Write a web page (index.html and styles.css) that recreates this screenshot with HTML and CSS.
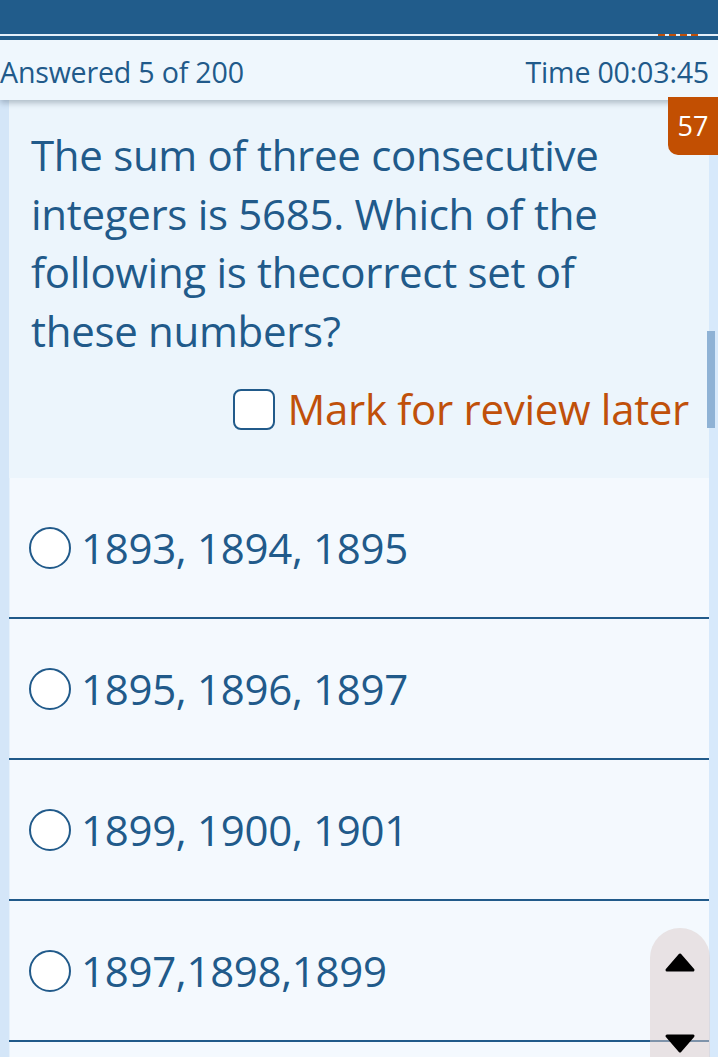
FILE: index.html
```html
<!DOCTYPE html>
<html lang="en">
<head>
<meta charset="utf-8">
<title>Quiz</title>
<link rel="stylesheet" href="styles.css">
</head>
<body>
<div class="topbar">
  <div class="topline"><span class="peek"></span></div>
</div>
<header class="status">
  <span class="answered">Answered 5 of 200</span>
  <span class="timer">Time 00:03:45</span>
</header>
<div class="badge">57</div>
<div class="page">
  <div class="rail-left"></div>
  <main class="content">
    <section class="question">
      <p class="qtext"><span class="ln">The sum of three consecutive</span><span class="ln">integers is 5685. Which of the</span><span class="ln">following is thecorrect set of</span><span class="ln">these numbers?</span></p>
      <label class="review"><span class="checkbox"></span><span class="review-text">Mark for review later</span></label>
    </section>
    <ul class="options">
      <li class="option"><span class="radio"></span><span class="opt-text">1893, 1894, 1895</span></li>
      <li class="option"><span class="radio"></span><span class="opt-text">1895, 1896, 1897</span></li>
      <li class="option"><span class="radio"></span><span class="opt-text">1899, 1900, 1901</span></li>
      <li class="option"><span class="radio"></span><span class="opt-text">1897,1898,1899</span></li>
    </ul>
  </main>
  <div class="rail-right"><div class="thumb"></div></div>
</div>
<div class="scroller">
  <svg width="60" height="129" viewBox="0 0 60 129">
    <path d="M17 42 L30 27 L43 42 Z" fill="#000" stroke="#000" stroke-width="3" stroke-linejoin="round"/>
    <path d="M17 108 L30 123 L43 108 Z" fill="#000" stroke="#000" stroke-width="3" stroke-linejoin="round"/>
  </svg>
</div>
</body>
</html>
```
FILE: styles.css
```css
* { box-sizing: border-box; }
html, body { margin: 0; padding: 0; }
body {
  width: 718px;
  height: 1057px;
  overflow: hidden;
  background: #f4f9fe;
  font-family: "Open Sans", "Noto Sans", sans-serif;
  color: #215a8a;
  position: relative;
}
.topbar {
  height: 40px;
  background: #215c8b;
  padding-top: 34px;
}
.topline {
  height: 2px;
  background: #e4eff9;
  position: relative;
}
.peek {
  position: absolute;
  left: 658px;
  top: 0;
  width: 40px;
  height: 2px;
  background: repeating-linear-gradient(90deg, #c0500a 0 7px, transparent 7px 11px);
}
.status {
  height: 60px;
  background: #eff7fd;
  display: flex;
  justify-content: space-between;
  align-items: center;
  padding: 0 9px 0 0;
  font-size: 28.6px;
  letter-spacing: -0.2px;
  position: relative;
  z-index: 2;
  box-shadow: 0 3px 6px rgba(60, 80, 100, 0.35);
}
.status span { line-height: 60px; padding-top: 4px; }
.badge {
  position: absolute;
  top: 97px;
  right: 0;
  width: 50px;
  height: 58px;
  background: #c24f02;
  color: #fff;
  font-size: 27px;
  display: flex;
  align-items: center;
  justify-content: center;
  border-bottom-left-radius: 10px;
  z-index: 3;
  padding-bottom: 2px;
}
.page {
  display: flex;
  height: 957px;
}
.rail-left {
  width: 10px;
  background: #d4e6f8;
  border-right: 1px solid #e6f1fb;
}
.content {
  width: 700px;
  margin-left: -1px;
  display: flex;
  flex-direction: column;
}
.rail-right {
  width: 9px;
  background: #d7e9fb;
  position: relative;
}
.thumb {
  position: absolute;
  left: -2px;
  top: 231px;
  width: 8px;
  height: 97px;
  background: #8fb2d5;
}
.question {
  height: 378px;
  background: #ecf5fc;
  padding: 26px 20px 0 22px;
  display: flex;
  flex-direction: column;
}
.qtext {
  margin: 0;
  font-size: 42px;
  line-height: 58.5px;
  letter-spacing: -0.3px;
}
.ln { display: block; white-space: nowrap; }
.review {
  align-self: flex-end;
  display: flex;
  align-items: center;
  gap: 13px;
  margin-top: 24px;
}
.checkbox {
  width: 42px;
  height: 41px;
  border: 2.5px solid #215a8a;
  border-radius: 8px;
  background: #fff;
}
.review-text {
  color: #c0500a;
  font-size: 42px;
  letter-spacing: -0.3px;
  line-height: 50px;
}
.options {
  list-style: none;
  margin: 0;
  padding: 0;
}
.option {
  height: 141px;
  border-bottom: 2px solid #215a8a;
  display: flex;
  align-items: center;
  padding-left: 20px;
  gap: 10px;
}
.radio {
  width: 42px;
  height: 42px;
  border: 2px solid #215a8a;
  border-radius: 50%;
  background: #fff;
  flex: none;
}
.opt-text {
  font-size: 42px;
  letter-spacing: -0.3px;
  line-height: 50px;
}
.scroller {
  position: absolute;
  left: 650px;
  top: 928px;
  width: 60px;
  height: 129px;
  border-radius: 30px 30px 0 0;
  background: rgba(220, 203, 202, 0.5);
  z-index: 4;
}
.scroller svg { display: block; }
```
